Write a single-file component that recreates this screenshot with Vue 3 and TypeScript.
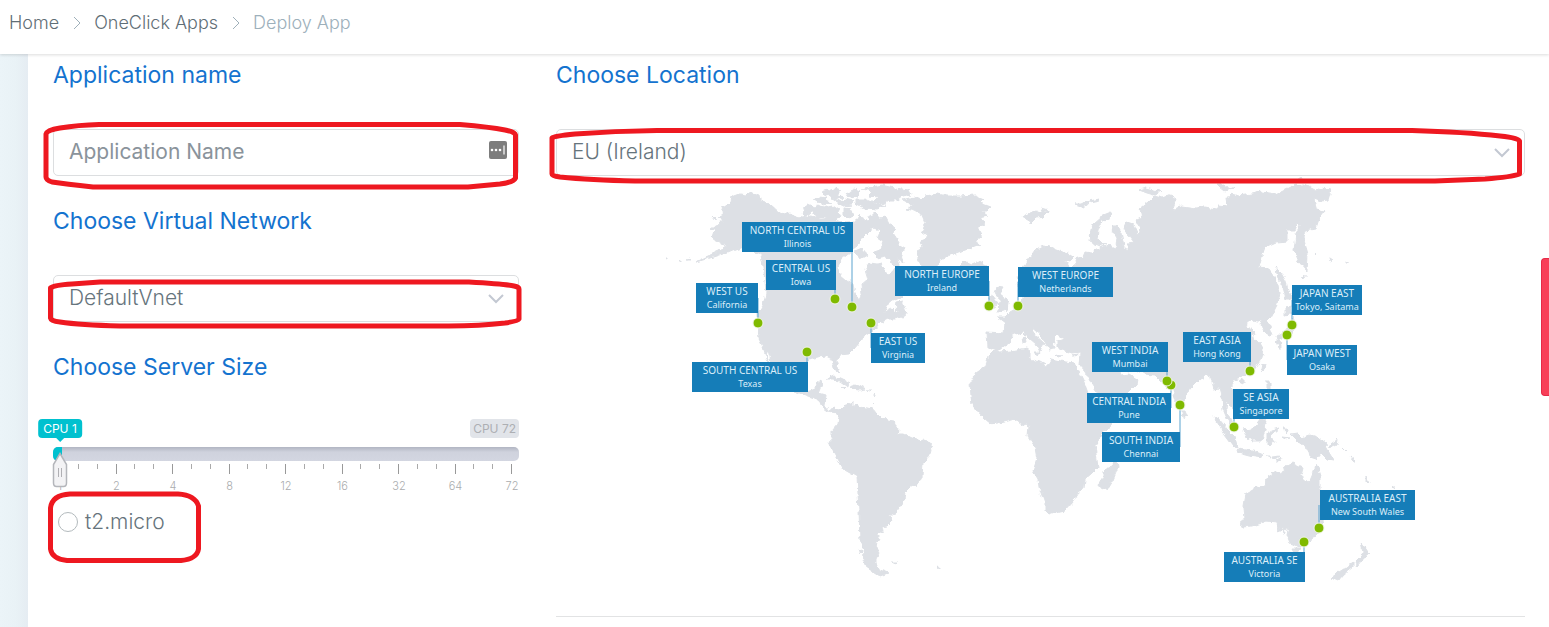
<script setup lang="ts">
import { computed, ref } from 'vue'

interface Region {
  name: string
  place: string
  x: number
  y: number
  w: number
  dotX: number
  dotY: number
}

const appName = ref('')
const network = ref('DefaultVnet')
const location = ref('EU (Ireland)')
const server = ref('')

const cpuSteps = [1, 2, 4, 8, 12, 16, 32, 64, 72]
const cpuIndex = ref(0)
const cpuValue = computed(() => cpuSteps[cpuIndex.value])
const cpuPercent = computed(() => `${(cpuIndex.value / (cpuSteps.length - 1)) * 100}%`)
const ticks = Array.from({ length: 25 }, (_, i) => ({
  left: `${(i / 24) * 100}%`,
  major: i % 3 === 0,
  label: i % 3 === 0 ? String(cpuSteps[i / 3]) : '',
}))

const regions: Region[] = [
  { name: 'NORTH CENTRAL US', place: 'Illinois', x: 742, y: 222, w: 111, dotX: 852, dotY: 307 },
  { name: 'CENTRAL US', place: 'Iowa', x: 766, y: 260, w: 70, dotX: 835, dotY: 299 },
  { name: 'WEST US', place: 'California', x: 696, y: 283, w: 62, dotX: 758, dotY: 323 },
  { name: 'SOUTH CENTRAL US', place: 'Texas', x: 692, y: 362, w: 116, dotX: 807, dotY: 352 },
  { name: 'EAST US', place: 'Virginia', x: 871, y: 333, w: 54, dotX: 871, dotY: 323 },
  { name: 'NORTH EUROPE', place: 'Ireland', x: 895, y: 266, w: 94, dotX: 989, dotY: 306 },
  { name: 'WEST EUROPE', place: 'Netherlands', x: 1018, y: 267, w: 95, dotX: 1018, dotY: 306 },
  { name: 'CENTRAL INDIA', place: 'Pune', x: 1087, y: 393, w: 84, dotX: 1171, dotY: 385 },
  { name: 'WEST INDIA', place: 'Mumbai', x: 1092, y: 342, w: 76, dotX: 1167, dotY: 381 },
  { name: 'SOUTH INDIA', place: 'Chennai', x: 1102, y: 432, w: 78, dotX: 1180, dotY: 405 },
  { name: 'EAST ASIA', place: 'Hong Kong', x: 1183, y: 332, w: 68, dotX: 1250, dotY: 371 },
  { name: 'JAPAN EAST', place: 'Tokyo, Saitama', x: 1292, y: 285, w: 70, dotX: 1292, dotY: 325 },
  { name: 'JAPAN WEST', place: 'Osaka', x: 1287, y: 345, w: 70, dotX: 1287, dotY: 335 },
  { name: 'SE ASIA', place: 'Singapore', x: 1233, y: 389, w: 56, dotX: 1234, dotY: 427 },
  { name: 'AUSTRALIA EAST', place: 'New South Wales', x: 1320, y: 490, w: 95, dotX: 1319, dotY: 528 },
  { name: 'AUSTRALIA SE', place: 'Victoria', x: 1224, y: 552, w: 81, dotX: 1304, dotY: 542 },
]

const continents = [
  // North and Central America
  'M721,208 L727,206 L731,202 L732,197 L740,194 L746,195 L752,193 L760,195 L761,200 L766,202 L772,206 L780,213 L785,215 L790,213 L800,218 L812,216 L822,220 L834,219 L846,223 L856,222 L861,214 L865,222 L871,221 L870,230 L862,238 L857,246 L851,251 L841,259 L837,266 L840,275 L846,280 L853,284 L855,294 L859,300 L862,294 L861,285 L868,279 L865,269 L869,263 L877,264 L881,263 L884,270 L890,275 L895,268 L899,276 L904,284 L905,291 L901,297 L893,300 L886,306 L884,312 L892,308 L896,313 L905,309 L906,315 L896,319 L888,319 L880,323 L876,329 L866,335 L860,342 L854,349 L849,354 L839,355 L836,361 L839,370 L837,373 L834,368 L832,359 L826,356 L818,357 L808,359 L801,365 L797,377 L800,387 L806,392 L813,390 L816,383 L821,379 L822,385 L819,393 L826,395 L825,405 L830,411 L834,408 L840,411 L837,414 L831,413 L824,408 L817,400 L806,396 L795,391 L785,386 L779,378 L772,366 L768,350 L766,355 L771,367 L767,359 L763,347 L759,339 L758,325 L758,312 L764,302 L766,292 L764,272 L761,255 L752,250 L744,246 L735,249 L728,252 L716,256 L704,260 L695,262 L708,256 L719,251 L727,245 L720,244 L712,238 L714,232 L710,229 L716,225 L724,222 L718,218 L724,213 Z',
  // South America
  'M838,411 L843,406 L849,404 L852,402 L852,408 L855,404 L860,407 L873,409 L876,413 L882,419 L894,421 L898,430 L896,434 L904,434 L912,438 L923,440 L931,444 L932,450 L927,459 L923,463 L922,477 L918,485 L911,486 L905,492 L904,500 L899,508 L894,515 L888,515 L892,521 L887,526 L882,527 L883,532 L877,534 L880,538 L877,543 L876,548 L879,553 L876,559 L876,563 L880,570 L888,573 L880,576 L872,571 L866,567 L863,560 L864,552 L860,540 L859,510 L857,477 L843,469 L838,460 L834,453 L829,444 L832,438 L832,431 L838,424 L839,416 Z',
  // Europe and Asia
  'M1005,323 L997,317 L1005,317 L1010,312 L1017,308 L1022,303 L1024,292 L1019,286 L1017,278 L1023,269 L1027,261 L1034,251 L1043,246 L1050,247 L1057,250 L1067,253 L1073,257 L1069,261 L1063,259 L1070,267 L1076,265 L1075,259 L1083,257 L1085,252 L1092,253 L1099,248 L1109,245 L1116,248 L1117,238 L1112,230 L1116,224 L1121,232 L1124,247 L1128,250 L1128,244 L1134,243 L1129,237 L1124,229 L1127,222 L1133,224 L1138,235 L1140,227 L1136,221 L1142,218 L1140,209 L1149,202 L1155,196 L1163,198 L1171,195 L1176,199 L1172,211 L1182,206 L1196,208 L1205,207 L1216,209 L1219,205 L1228,206 L1227,199 L1231,194 L1239,196 L1252,194 L1262,192 L1275,194 L1282,191 L1290,187 L1297,184 L1307,186 L1317,191 L1321,188 L1331,190 L1328,200 L1322,201 L1314,198 L1316,208 L1324,212 L1319,219 L1316,228 L1305,230 L1303,237 L1308,254 L1307,271 L1299,262 L1294,250 L1296,234 L1300,225 L1298,223 L1295,230 L1287,230 L1287,241 L1276,242 L1265,247 L1262,256 L1259,268 L1269,269 L1276,279 L1279,292 L1277,305 L1271,317 L1267,321 L1270,327 L1273,335 L1268,336 L1264,330 L1261,325 L1263,321 L1256,321 L1252,319 L1245,325 L1252,329 L1255,332 L1251,337 L1259,343 L1263,350 L1260,361 L1253,371 L1241,377 L1235,379 L1230,386 L1235,391 L1241,400 L1242,409 L1236,413 L1230,405 L1227,401 L1226,409 L1231,421 L1235,430 L1228,421 L1223,409 L1222,398 L1219,388 L1214,389 L1211,378 L1206,374 L1199,380 L1191,388 L1186,394 L1184,402 L1181,409 L1176,401 L1171,386 L1167,388 L1162,382 L1155,375 L1144,374 L1137,370 L1130,371 L1122,369 L1119,363 L1114,362 L1117,371 L1122,375 L1129,374 L1137,379 L1136,385 L1128,393 L1113,400 L1103,403 L1098,393 L1091,382 L1085,371 L1079,364 L1080,352 L1073,353 L1064,351 L1057,347 L1057,341 L1066,338 L1058,335 L1053,340 L1055,349 L1049,350 L1045,342 L1036,331 L1032,328 L1033,333 L1045,344 L1043,345 L1040,352 L1036,344 L1029,338 L1023,332 L1012,335 L1010,342 L1003,348 L996,351 L988,348 L987,332 L1004,333 Z',
  // Africa
  'M1000,352 L1011,351 L1027,348 L1030,350 L1030,359 L1040,362 L1047,366 L1051,359 L1065,362 L1074,363 L1078,370 L1084,382 L1089,396 L1100,407 L1112,407 L1121,405 L1114,422 L1102,433 L1095,444 L1096,453 L1098,467 L1091,474 L1085,479 L1084,488 L1078,493 L1073,502 L1065,511 L1056,513 L1050,515 L1045,510 L1045,504 L1039,487 L1038,479 L1033,471 L1037,459 L1035,448 L1028,437 L1029,426 L1022,424 L1016,419 L1004,422 L991,424 L983,417 L972,405 L971,396 L970,384 L977,372 L986,366 L988,357 L994,351 Z',
  // Australia
  'M1245,494 L1255,488 L1265,485 L1268,477 L1276,472 L1281,474 L1286,467 L1293,463 L1302,467 L1300,475 L1309,483 L1314,471 L1316,463 L1320,475 L1320,488 L1327,500 L1327,514 L1322,527 L1313,539 L1306,544 L1301,547 L1290,543 L1287,535 L1289,527 L1283,535 L1285,528 L1279,532 L1277,522 L1266,521 L1252,526 L1243,527 L1239,524 L1244,520 L1243,506 Z',
  // Greenland
  'M903,200 L914,197 L921,200 L925,196 L938,194 L947,196 L960,196 L975,195 L984,199 L980,203 L991,207 L987,211 L981,211 L988,216 L979,218 L985,223 L979,226 L979,232 L982,237 L975,242 L980,244 L967,249 L953,254 L942,258 L935,267 L928,272 L923,269 L918,259 L917,250 L923,247 L921,240 L928,237 L922,233 L926,225 L922,215 L915,211 L907,209 L913,205 Z',
]

const islands = [
  // Arctic archipelago
  'M812,209 L818,205 L824,208 L832,206 L838,210 L841,216 L834,221 L826,218 L816,218 Z',
  'M801,214 L808,204 L815,207 L810,214 L804,217 Z',
  'M821,192 L829,190 L833,193 L826,195 Z M814,199 L821,196 L827,197 L824,200 L831,202 L824,205 L818,202 Z',
  'M828,192 L835,189 L841,191 L836,194 L843,197 L835,201 L830,197 Z',
  'M837,202 L845,199 L853,201 L852,205 L843,206 Z',
  'M843,208 L850,208 L853,216 L848,219 L843,214 Z',
  'M846,193 L854,189 L861,192 L857,196 L849,197 Z',
  'M856,199 L864,199 L874,203 L885,206 L877,209 L864,208 L856,204 Z',
  'M862,190 L871,187 L882,185 L895,188 L909,190 L911,194 L903,196 L898,200 L889,200 L883,204 L873,202 L878,197 L868,196 L872,192 Z',
  'M867,216 L875,213 L880,218 L886,217 L889,223 L895,228 L893,234 L899,238 L897,244 L904,248 L901,253 L904,263 L897,257 L900,269 L890,263 L886,256 L877,258 L872,253 L881,250 L883,241 L877,237 L879,230 L871,227 Z',
  'M855,252 L862,249 L867,255 L860,259 Z',
  'M896,310 L897,302 L902,301 L905,309 L901,312 Z',
  // Aleutians
  'M687,260 l3,-1 l1,1 Z M678,261 l3,-1 v1 Z M666,259 l2,0 l0,1 Z M712,217 l4,1 l-1,3 Z',
  // Caribbean
  'M827,379 L834,376 L843,380 L850,384 L847,386 L840,381 L832,379 Z',
  'M850,386 L856,384 L866,389 L860,390 L853,389 Z M841,388 l5,0 l-2,2 Z M867,389 l3,0 l0,1 Z M874,394 l1,2 Z M874,402 l1,2 Z',
  // North Atlantic
  'M960,267 L965,262 L972,265 L979,262 L986,265 L988,271 L975,274 L964,271 Z',
  'M995,292 L997,287 L1003,288 L1000,293 L1004,296 L1009,304 L1008,310 L998,312 L1000,307 L997,304 L1001,301 L997,296 Z',
  'M988,308 L988,300 L993,297 L997,302 L994,308 Z',
  // Svalbard, Franz Josef Land, Novaya Zemlya, Severnaya Zemlya
  'M1023,216 L1030,213 L1036,211 L1040,213 L1050,211 L1044,217 L1036,218 L1031,223 L1026,220 Z M1041,208 l7,2 l-6,2 Z',
  'M1075,204 l6,0 l4,-2 l5,1 l-6,4 Z M1090,201 l8,-2 l2,2 l-9,2 Z',
  'M1089,241 L1092,231 L1093,224 L1101,217 L1111,213 L1110,217 L1101,222 L1098,231 L1097,239 L1106,244 L1100,246 Z',
  'M1139,190 L1146,188 L1153,190 L1160,191 L1154,195 L1147,193 Z',
  'M1216,185 L1223,184 L1228,188 L1235,187 L1224,192 L1219,188 Z M1297,180 l4,-3 l4,3 Z',
  // Mediterranean
  'M1022,338 l4,-1 l1,5 l-4,1 Z M1023,334 l2,-1 v3 Z M1033,352 l7,0 l-2,3 Z M1056,355 l7,1 l-5,1 Z M1073,355 l5,-1 l-2,3 Z',
  // Africa and Indian Ocean
  'M1103,470 L1112,466 L1117,460 L1118,467 L1113,479 L1107,489 L1102,490 L1099,483 L1103,477 Z',
  'M1182,411 L1185,411 L1187,416 L1183,418 Z',
  // Sakhalin, Japan, Kurils
  'M1276,268 L1281,273 L1286,282 L1288,291 L1294,299 L1286,299 L1283,287 L1278,278 Z',
  'M1285,308 L1291,307 L1292,314 L1285,315 Z M1293,316 L1296,325 L1292,333 L1285,336 L1278,340 L1277,336 L1286,331 L1290,324 Z M1276,341 l4,0 l1,6 l-3,0 Z',
  'M1303,279 l2,-4 v3 Z M1314,252 l2,2 Z M1330,258 l3,2 l-2,1 Z M1346,261 l2,1 l-2,0 Z',
  // Taiwan, Hainan, Philippines
  'M1262,363 l3,2 l-2,7 l-2,-4 Z M1239,381 l5,-2 l0,4 l-3,2 Z M1266,382 l4,0 l0,8 l-4,-2 Z',
  // Indonesia
  'M1213,416 L1219,419 L1227,429 L1235,437 L1238,448 L1233,447 L1224,435 L1219,425 Z',
  'M1237,449 L1247,450 L1256,452 L1264,455 L1262,457 L1249,455 L1238,452 Z M1266,456 l5,0 l0,2 Z M1273,457 l8,-1 l-7,3 Z M1275,461 l7,-4 l-2,3 Z',
  'M1244,430 L1251,429 L1258,423 L1262,417 L1266,422 L1265,431 L1261,441 L1253,441 L1247,438 Z',
  'M1267,433 L1272,430 L1279,428 L1273,433 L1271,437 L1276,443 L1271,441 L1270,446 L1267,445 Z M1284,426 l3,4 l-1,4 Z M1281,437 l8,1 l-5,1 Z',
  'M1291,435 L1298,434 L1302,438 L1310,435 L1319,438 L1326,443 L1327,449 L1334,461 L1328,460 L1321,453 L1316,459 L1310,457 L1308,449 L1297,441 Z',
  'M1329,445 L1337,440 L1336,445 L1330,448 Z M1343,448 l4,4 Z M1350,456 l6,5 l-2,0 Z M1367,477 l2,6 l-2,-2 Z M1392,487 l3,0 l-2,1 Z',
  // New Zealand and Tasmania
  'M1361,542 L1365,548 L1369,554 L1362,560 L1357,566 L1355,562 L1361,556 L1363,551 Z',
  'M1353,562 L1353,567 L1344,574 L1338,581 L1331,578 L1339,572 L1347,567 Z M1291,549 l9,0 l-3,5 l-4,-1 Z',
  // South Atlantic
  'M892,562 l5,0 l-2,2 Z M937,566 l4,2 l-3,-1 Z M858,549 l4,2 l-1,3 Z',
]
</script>

<template>
  <div class="page">
    <header class="topbar">
      <nav aria-label="Breadcrumb">
        <ol class="crumbs">
          <li><a href="#">Home</a></li>
          <li>
            <svg class="sep" viewBox="0 0 8 14" aria-hidden="true"><path d="M1 1l6 6-6 6" /></svg>
            <a href="#">OneClick Apps</a>
          </li>
          <li>
            <svg class="sep" viewBox="0 0 8 14" aria-hidden="true"><path d="M1 1l6 6-6 6" /></svg>
            <span class="current" aria-current="page">Deploy App</span>
          </li>
        </ol>
      </nav>
    </header>

    <main class="body">
      <form class="panel" @submit.prevent>
        <div class="column">
          <div class="field">
            <label class="title" for="app-name">Application name</label>
            <div class="control">
              <input id="app-name" v-model="appName" class="box" type="text" placeholder="Application Name" />
              <svg class="keeper" viewBox="0 0 18 18" aria-hidden="true">
                <rect width="18" height="18" rx="2" fill="#7d7d7d" />
                <circle cx="3" cy="9" r="1.300" fill="#fff" />
                <circle cx="7" cy="9" r="1.300" fill="#fff" />
                <circle cx="11" cy="9" r="1.300" fill="#fff" />
                <path d="M15 4.500v9" stroke="#e4e4e4" stroke-width="1.500" />
              </svg>
              <svg class="mark mark-name" viewBox="43 120 476 70" preserveAspectRatio="none" aria-hidden="true">
                <path d="M46 134Q47 130 60 128Q78 125 99 124.500H460Q490 127 505 130Q515 132 515.500 135V178Q514 182 500 184L468 187H93Q65 184 52 182Q46 180 46 177Z" />
              </svg>
            </div>
          </div>

          <div class="field">
            <label class="title" for="network">Choose Virtual Network</label>
            <div class="control">
              <select id="network" v-model="network" class="box">
                <option>DefaultVnet</option>
              </select>
              <svg class="chevron" viewBox="0 0 16 10" aria-hidden="true"><path d="M1 1l7 7 7-7" /></svg>
              <svg class="mark mark-network" viewBox="48 278 474 52" preserveAspectRatio="none" aria-hidden="true">
                <path d="M50.500 288Q54 285 72 284L100 282H469Q505 284 514 286Q519 287 519 289V319Q518 321 505 323Q480 326 449 326H120Q80 325 60 322Q51 321 50.500 318Z" />
              </svg>
            </div>
          </div>

          <section class="server">
            <h2 class="title">Choose Server Size</h2>
            <div class="slider">
              <div class="badges">
                <div class="rail">
                  <output class="badge badge-current" for="cpu" :style="{ left: cpuPercent }">CPU {{ cpuValue }}</output>
                </div>
                <span class="badge badge-max">CPU 72</span>
              </div>
              <div class="track">
                <div class="rail"><div class="fill" :style="{ width: cpuPercent }"></div></div>
              </div>
              <div class="rail scale">
                <span
                  v-for="tick in ticks"
                  :key="tick.left"
                  class="tick"
                  :class="{ major: tick.major }"
                  :style="{ left: tick.left }"
                >{{ tick.label }}</span>
                <svg class="handle" :style="{ left: cpuPercent }" viewBox="0 0 16 36" aria-hidden="true">
                  <path d="M8 1.500L14.500 12.500V31Q14.500 34.500 11.500 34.500H4.500Q1.500 34.500 1.500 31V12.500Z" fill="#f3f3f5" stroke="#b4b6bb" stroke-width="1.500" />
                  <path d="M6.500 16v9M9.500 16v9" stroke="#b0b0b4" />
                </svg>
              </div>
              <input id="cpu" v-model.number="cpuIndex" class="range" type="range" min="0" max="8" step="1" aria-label="CPU count" />
            </div>
            <label class="option" for="t2-micro">
              <input id="t2-micro" v-model="server" type="radio" name="server" value="t2.micro" />
              <span>t2.micro</span>
              <svg class="mark mark-option" viewBox="48 491 154 73" preserveAspectRatio="none" aria-hidden="true">
                <path d="M50.500 508Q52 495 70 494H178Q195 495 198.500 506V549Q197 559 181 560.500H67Q52 559 50.500 549Z" />
              </svg>
            </label>
          </section>
        </div>

        <div class="column location">
          <div class="field">
            <label class="title" for="location">Choose Location</label>
            <div class="control">
              <select id="location" v-model="location" class="box">
                <option>EU (Ireland)</option>
              </select>
              <svg class="chevron" viewBox="0 0 16 10" aria-hidden="true"><path d="M1 1l7 7 7-7" /></svg>
              <svg class="mark mark-location" viewBox="549 126 974 58" preserveAspectRatio="none" aria-hidden="true">
                <path d="M552 138Q554 136 575 134Q615 131 657 130.500H1412Q1465 132 1500 136Q1519 138 1519.500 141V174Q1512 177 1485 179L1435 181H635Q590 180 560 177Q552 176 552 174Z" />
              </svg>
            </div>
          </div>
          <svg class="map" viewBox="556 176 969 414" role="img" aria-label="Data centre locations">
            <defs>
              <filter id="coast" x="0" y="0" width="1" height="1" color-interpolation-filters="sRGB">
                <feTurbulence type="fractalNoise" baseFrequency="0.17" numOctaves="2" seed="4" result="noise" />
                <feDisplacementMap in="SourceGraphic" in2="noise" scale="6" xChannelSelector="R" yChannelSelector="G" />
              </filter>
            </defs>
            <g class="land" filter="url(#coast)">
              <path v-for="d in continents" :key="d" :d="d" />
              <path v-for="d in islands" :key="d" :d="d" />
            </g>
            <g v-for="r in regions" :key="r.name">
              <line class="lead" :x1="r.dotX" :x2="r.dotX" :y1="r.dotY" :y2="r.y + 15" />
              <rect class="tag" :x="r.x" :y="r.y" :width="r.w" height="30" />
              <text class="region" :x="r.x + r.w / 2" :y="r.y + 12">{{ r.name }}</text>
              <text class="place" :x="r.x + r.w / 2" :y="r.y + 25">{{ r.place }}</text>
            </g>
            <circle v-for="r in regions" :key="r.place" class="dot" :cx="r.dotX" :cy="r.dotY" r="5" />
          </svg>
          <hr class="rule" />
        </div>
      </form>
    </main>
    <button class="side-tab" type="button" aria-label="Feedback"></button>
  </div>
</template>

<style>
body {
  margin: 0;
  background: #fff;
}
</style>

<style scoped>
.page {
  min-height: 100vh;
  display: flex;
  flex-direction: column;
  font-family: Inter, "Liberation Sans", sans-serif;
  font-weight: 300;
  color: #66747c;
  box-sizing: border-box;
}
.page *,
.page *::before,
.page *::after {
  box-sizing: border-box;
}
.topbar {
  position: relative;
  z-index: 2;
  padding: 8px 9px 16px;
  background: #fff;
  box-shadow: 0 1px 3px rgba(0, 0, 0, 0.14);
}
.crumbs {
  display: flex;
  gap: 14px;
  margin: 0;
  padding: 0;
  list-style: none;
  font-size: 18px;
  line-height: 30px;
}
.crumbs li {
  display: flex;
  align-items: center;
  gap: 13px;
}
.crumbs a {
  color: #5f6e76;
  text-decoration: none;
}
.crumbs .current {
  color: #9db0bb;
}
.sep {
  width: 8px;
  height: 14px;
  fill: none;
  stroke: #9fb0ba;
}
.body {
  flex: 1;
  display: flex;
  padding-left: 28px;
  background: linear-gradient(to right, #ebf4f8 0, #e9f2f6 16px, #e5ecf2 28px);
}
.panel {
  flex: 1;
  display: grid;
  grid-template-columns: 466fr 969fr;
  gap: 37px;
  padding: 9px 24px 10px 25px;
  background: #fff;
}
.column {
  min-width: 0;
}
.field {
  margin-bottom: 33px;
}
.title {
  display: block;
  margin: 0 0 42px;
  font-size: 23px;
  font-weight: 400;
  line-height: 24px;
  color: #1473cf;
}
.control {
  position: relative;
}
.box {
  display: block;
  width: 100%;
  height: 47px;
  margin: 0;
  padding: 0 15px 2px;
  border: 1px solid #dcdee0;
  border-radius: 5px;
  appearance: none;
  background: transparent;
  font: inherit;
  font-size: 21px;
  color: #66747c;
  outline: none;
}
.box::placeholder {
  color: #8a939b;
  font-weight: 400;
  opacity: 1;
}
.keeper {
  position: absolute;
  right: 12px;
  top: 12px;
  width: 18px;
  height: 18px;
}
.chevron {
  position: absolute;
  right: 15px;
  top: 19px;
  width: 16px;
  height: 10px;
  fill: none;
  stroke: #c3c8d2;
  stroke-width: 2;
  pointer-events: none;
}
.mark {
  position: absolute;
  fill: none;
  stroke: #ee1820;
  stroke-width: 5;
  stroke-linejoin: round;
  overflow: visible;
  pointer-events: none;
}
.mark path {
  vector-effect: non-scaling-stroke;
}
.mark-name {
  left: -10px;
  top: -9px;
  width: calc(100% + 10px);
  height: 70px;
}
.mark-network {
  left: -5px;
  top: 3px;
  width: calc(100% + 8px);
  height: 52px;
}
.mark-location {
  left: -7px;
  top: -3px;
  width: calc(100% + 5px);
  height: 58px;
}
.mark-option {
  left: -10px;
  top: -19px;
  width: 154px;
  height: 73px;
}
.server .title {
  margin-bottom: 40px;
}
.slider {
  position: relative;
}
.rail {
  position: relative;
  margin: 0 7px;
}
.badges {
  position: relative;
  height: 28px;
}
.badge {
  position: absolute;
  top: 0;
  padding: 0 5px;
  border-radius: 4px;
  font-size: 12px;
  font-weight: 400;
  line-height: 19px;
  white-space: nowrap;
}
.badge-current {
  background: #00c1cf;
  color: #fff;
  transform: translateX(-50%);
}
.badge-current::after {
  content: "";
  position: absolute;
  left: 50%;
  top: 19px;
  margin-left: -4px;
  border: 4px solid transparent;
  border-top-color: #00c1cf;
  border-bottom: 0;
}
.badge-max {
  right: 0;
  background: #e1e4e9;
  color: #adafb3;
  padding: 0 3px;
}
.track {
  height: 14px;
  border-radius: 5px;
  overflow: hidden;
  background: linear-gradient(#b1b5c2, #cfd2dd 5px, #d3d6e1);
}
.fill {
  position: relative;
  height: 14px;
}
.fill::before {
  content: "";
  position: absolute;
  inset: 0 -2px 0 -7px;
  background: #00c1cf;
}
.scale {
  height: 36px;
}
.tick {
  position: absolute;
  top: 3px;
  width: 30px;
  margin-left: -15px;
  padding-top: 15px;
  font-size: 11px;
  line-height: 14px;
  text-align: center;
  color: #aaacae;
}
.tick::before {
  content: "";
  position: absolute;
  left: 14px;
  top: 0;
  width: 1px;
  height: 5px;
  background: #aaa;
}
.tick.major::before {
  height: 10px;
  background: #999;
}
.handle {
  position: absolute;
  top: -9px;
  width: 16px;
  height: 36px;
  margin-left: -8px;
}
.range {
  position: absolute;
  left: 0;
  top: 28px;
  width: 100%;
  height: 40px;
  margin: 0;
  opacity: 0;
  cursor: pointer;
}
.option {
  position: relative;
  display: inline-flex;
  align-items: center;
  gap: 7px;
  margin: 13px 0 0 5px;
  font-size: 21px;
  line-height: 24px;
}
.option input {
  appearance: none;
  width: 20px;
  height: 20px;
  margin: 0;
  border: 1px solid #b3babd;
  border-radius: 50%;
  background: #fff;
}
.option input:checked {
  background: radial-gradient(#00c1cf 0 5px, #fff 6px);
}
.location .field {
  margin-bottom: 0;
}
.map {
  display: block;
  width: 100%;
  height: auto;
  pointer-events: none;
}
.land {
  fill: #dde0e5;
  stroke: #dde0e5;
  stroke-width: 1;
  stroke-linejoin: round;
}
.lead {
  stroke: #5ba3cf;
  stroke-width: 1;
}
.tag {
  fill: #157db8;
}
.region,
.place {
  font-family: "Noto Sans", "Open Sans", sans-serif;
  font-weight: 400;
  text-anchor: middle;
  fill: #dceef8;
}
.region {
  font-size: 10px;
}
.place {
  font-size: 9px;
}
.dot {
  fill: #7fba00;
  stroke: #f2f6e8;
  stroke-width: 1;
}
.rule {
  margin: 26px 0 0;
  border: 0;
  border-top: 1px solid #e2e3e4;
}
.side-tab {
  position: fixed;
  right: 0;
  top: 258px;
  z-index: 3;
  width: 8px;
  height: 138px;
  padding: 0;
  border: 1px solid #e62a48;
  border-right: 0;
  border-radius: 4px 0 0 4px;
  background: #f83f58;
}
</style>
